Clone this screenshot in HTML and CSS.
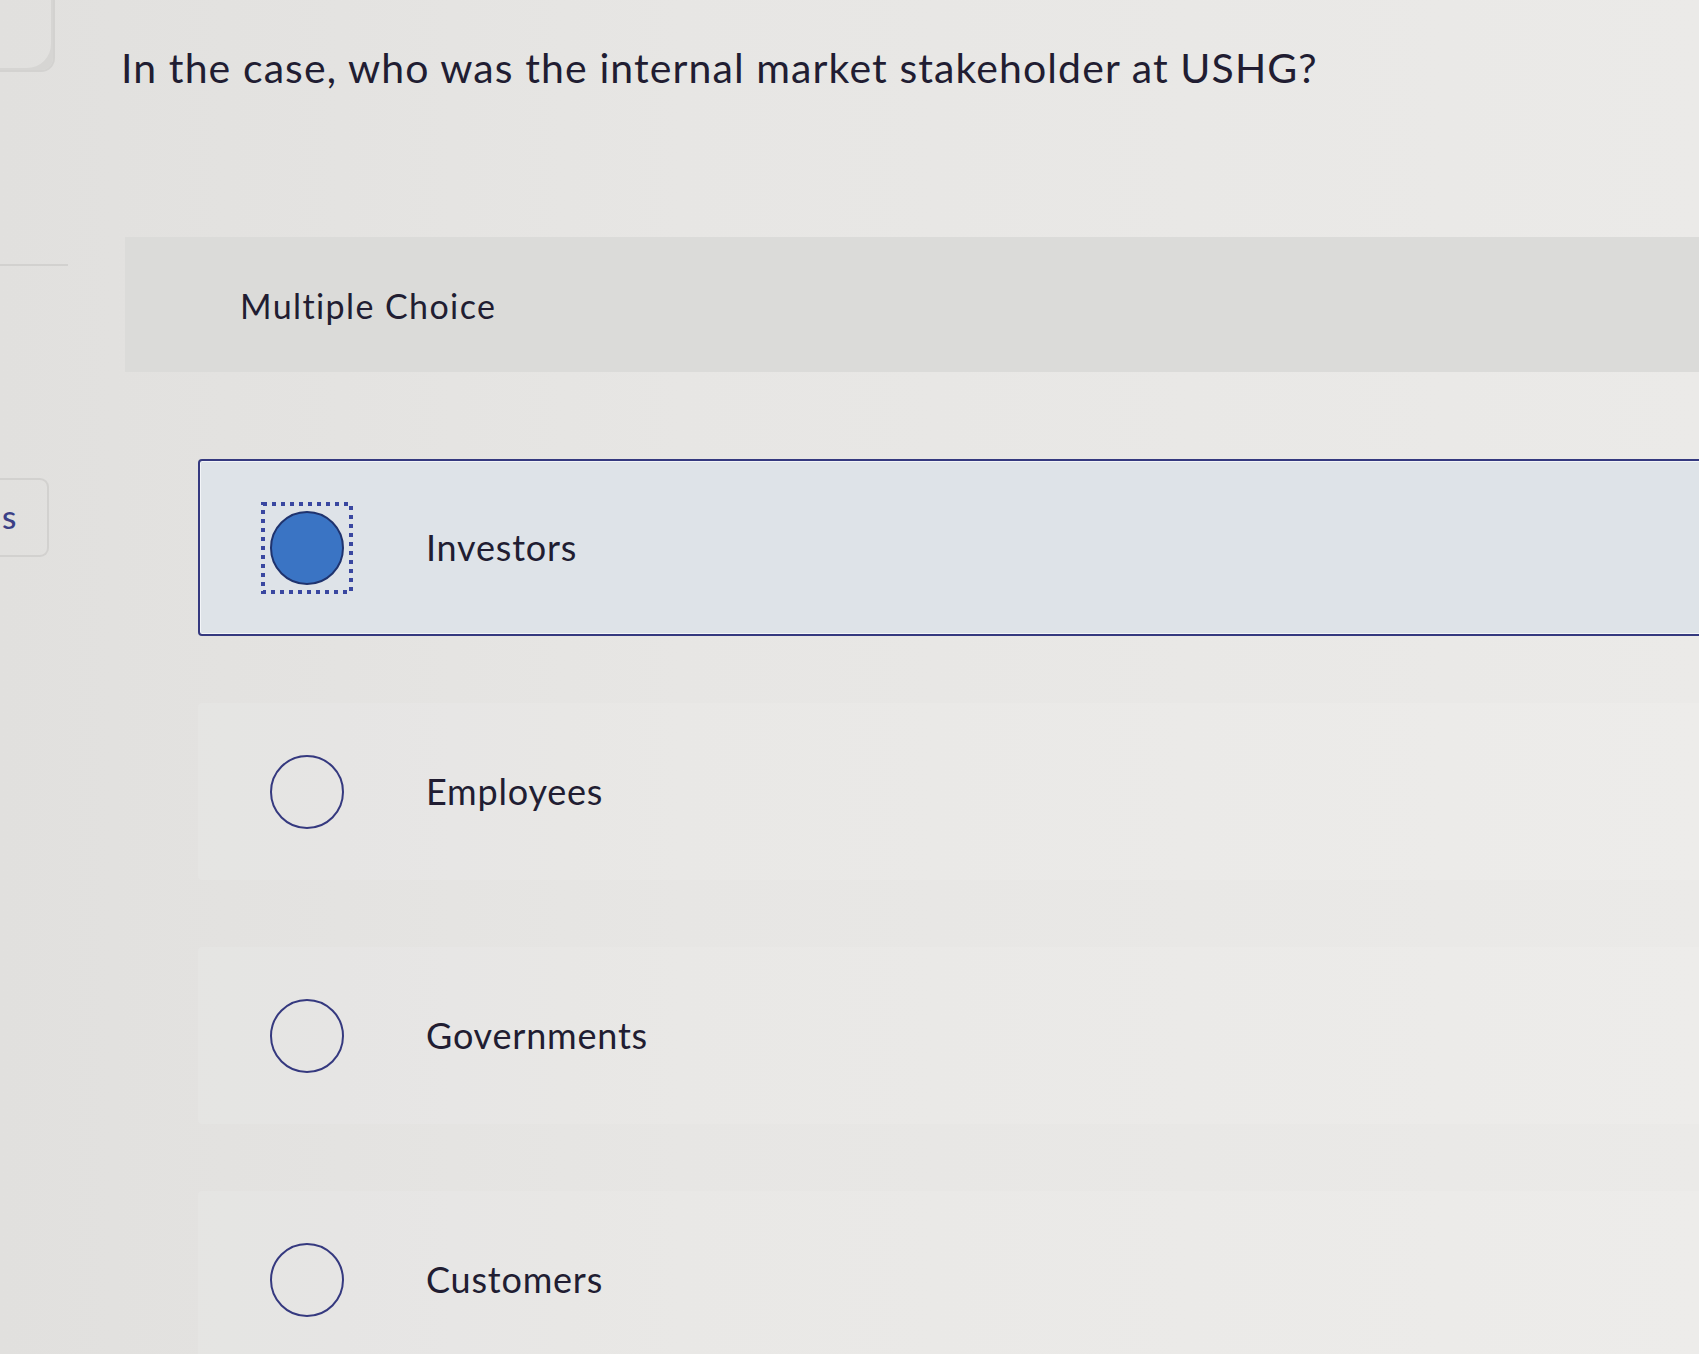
FILE: index.html
```html
<!DOCTYPE html>
<html>
  <head>
    <meta charset="UTF-8" />
    <meta name="viewport" content="width=device-width,initial-scale=1" />
    <title>Multiple Choice</title>
    <link rel="stylesheet" href="styles.css">
  </head>
  <body>
    <div class="page">
      <aside class="rail">
        <div class="rail-card"></div>
        <div class="rail-rule"></div>
        <div class="rail-tab"><span>s</span></div>
      </aside>
      <main class="question">
        <h1 class="prompt">In the case, who was the internal market stakeholder at USHG?</h1>
        <section class="choice-panel">
          <div class="choice-head">Multiple Choice</div>
          <div class="choices">
            <label class="choice selected">
              <span class="radio checked">
                <svg class="focus-ring" viewBox="0 0 92 92">
                  <rect x="2" y="2" width="88" height="88" fill="none" stroke="#3947a0" stroke-width="4" stroke-dasharray="4 5" />
                </svg>
              </span>
              <span class="choice-text">Investors</span>
            </label>
            <label class="choice">
              <span class="radio"></span>
              <span class="choice-text">Employees</span>
            </label>
            <label class="choice">
              <span class="radio"></span>
              <span class="choice-text">Governments</span>
            </label>
            <label class="choice">
              <span class="radio"></span>
              <span class="choice-text">Customers</span>
            </label>
          </div>
        </section>
      </main>
    </div>
  </body>
</html>
```

FILE: styles.css
```css
* {
  --ink: #211d32;
  --indigo: #35397f;
  --blue: #3a74c4;
  --head: #dbdbd9;
  --picked: #dee3e8;
  box-sizing: border-box;
}
html,
body {
  margin: 0;
  padding: 0;
  height: 100%;
  overflow: hidden;
}
body {
  font-family: "Lato", "Open Sans", sans-serif;
  color: var(--ink);
  background: linear-gradient(90deg, #e1e0de 0%, #e7e6e4 40%, #ebeae8 100%);
}
.page {
  display: flex;
  min-height: 100%;
}

/* left rail, mostly cut off */
.rail {
  width: 52px;
  flex-shrink: 0;
  display: flex;
  flex-direction: column;
}
.rail-card {
  width: 55px;
  height: 72px;
  border: 2px solid #d3d2d0;
  border-top: none;
  border-left: none;
  border-radius: 0 0 14px 0;
  box-shadow: inset -14px -14px 0 -12px #d6d5d3;
}
.rail-rule {
  margin-top: 192px;
  width: 68px;
  height: 2px;
  background: #d2d1cf;
}
.rail-tab {
  margin-top: 212px;
  width: 49px;
  height: 79px;
  border: 2px solid #d2d1cf;
  border-left: none;
  border-radius: 0 9px 9px 0;
  display: flex;
  align-items: center;
  padding: 0 0 4px 2px;
  font-size: 33px;
  font-weight: 500;
  color: #3b3f86;
}

.question {
  flex: 1;
  padding-left: 69px;
}
.prompt {
  margin: 43px 0 0 0;
  font-size: 41px;
  font-weight: 400;
  line-height: 1.2;
  letter-spacing: 1.1px;
}
.choice-panel {
  margin: 145px -40px 0 4px;
}
.choice-head {
  height: 135px;
  padding: 49px 0 0 115px;
  font-size: 34px;
  line-height: 1.2;
  letter-spacing: 1.4px;
  background: var(--head);
}
.choices {
  display: flex;
  flex-direction: column;
  gap: 67px;
  padding: 87px 0 0 73px;
}
.choice {
  height: 177px;
  display: flex;
  align-items: center;
  padding-left: 70px;
  border: 2px solid transparent;
  border-radius: 4px;
  background: rgba(255, 255, 255, 0.1);
}
.choice.selected {
  border-color: var(--indigo);
  background: var(--picked);
  box-shadow: inset 0 0 0 1px #f3f5f8;
}
.radio {
  position: relative;
  width: 74px;
  height: 74px;
  flex-shrink: 0;
  border: 2.5px solid var(--indigo);
  border-radius: 50%;
}
.radio.checked {
  background: var(--blue);
  border-color: #1f336e;
  border-width: 2px;
}
.focus-ring {
  position: absolute;
  left: -11px;
  top: -11px;
  width: 92px;
  height: 92px;
}
.choice-text {
  margin-left: 82px;
  font-size: 36px;
  line-height: 1.2;
  letter-spacing: 0.8px;
}
```
